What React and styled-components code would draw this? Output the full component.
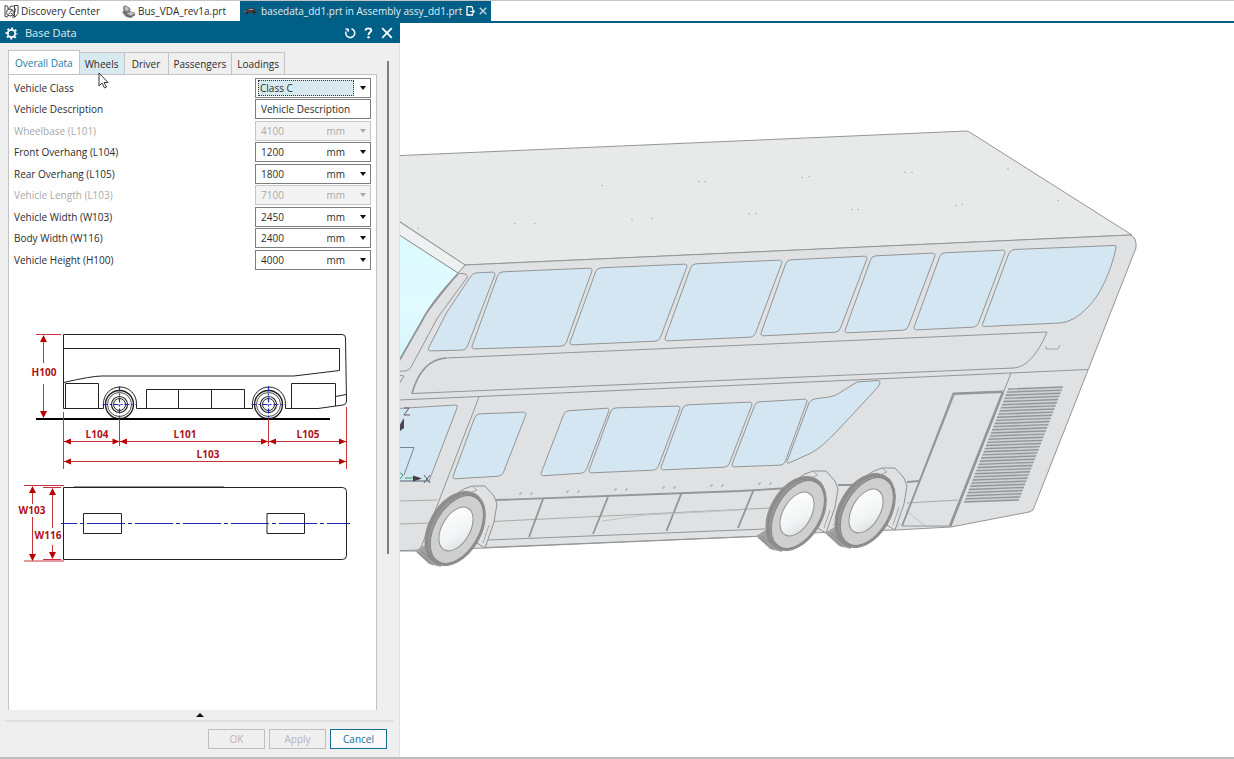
import React, { useState } from "react";
import styled, { createGlobalStyle } from "styled-components";

const GlobalStyle = createGlobalStyle`
  * {
    box-sizing: border-box;
  }

  body {
    margin: 0;
    background: #fff;
    color: #2b2b2b;
    font-family: "Open Sans", "Noto Sans", sans-serif;
    font-size: 10px;
    line-height: 14px;
  }

  button, input, select {
    font: inherit;
    color: inherit;
    margin: 0;
    padding: 0;
    border: 0;
    border-radius: 0;
    background: none;
    outline: none;
  }

  svg {
    display: block;
    flex: none;
  }
`;

const Page = styled.div`
  display: flex;
  flex-direction: column;
  min-height: 100vh;
  border-top: 1px solid #c4c4c4;
  border-bottom: 2px solid #bdbdbd;
`;

const DocBar = styled.nav`
  display: flex;
  height: 22px;
  border-bottom: 2px solid #005f87;
`;

const DocTab = styled.button`
  display: flex;
  align-items: center;
  gap: ${(props) => props.$gap || 2}px;
  padding: 0 ${(props) => props.$right || 14}px 0 4px;
  white-space: nowrap;
  background: ${(props) => (props.$active ? "#005f87" : "transparent")};
  color: ${(props) => (props.$active ? "#e3edf2" : "#2b2b2b")};
`;

const Workspace = styled.main`
  display: flex;
  flex: 1;
`;

const Dialog = styled.section`
  position: relative;
  display: flex;
  flex-direction: column;
  width: 400px;
  flex: none;
  background: #efefef;
  border-right: 1px solid #e2e2e2;
`;

const DialogHeader = styled.header`
  display: flex;
  align-items: center;
  height: 20px;
  margin-right: -1px;
  padding: 0 7px 0 5px;
  background: #005f87;
  color: #e3edf2;
`;

const DialogTitle = styled.h1`
  flex: 1;
  margin: 0 0 0 7px;
  font-size: 11px;
  font-weight: 400;
`;

const HeaderButton = styled.button`
  display: flex;
  margin-left: 8px;
  color: #fff;
`;

const DialogBody = styled.div`
  display: flex;
  flex: 1;
  padding: 7px 0 0 8px;
`;

const BodyColumn = styled.div`
  display: flex;
  flex: 1;
  flex-direction: column;
`;

const TabList = styled.div`
  display: flex;
  align-items: flex-end;
  height: 25px;
  margin-bottom: -1px;
`;

const Tab = styled.button`
  height: ${(props) => (props.$active ? 25 : 23)}px;
  min-width: 44px;
  padding: 0 ${(props) => (props.$active ? 6 : 5)}px;
  border: 1px solid #c3c3c3;
  border-left-width: ${(props) => (props.$active ? 1 : 0)}px;
  border-bottom-color: ${(props) => (props.$active ? "#fff" : "#c3c3c3")};
  background: ${(props) => (props.$active ? "#fff" : "#efefef")};
  color: ${(props) => (props.$active ? "#1b7ba0" : "#2b2b2b")};

  &:nth-child(2) {
    background: #d8eaf0;
  }
`;

const Panel = styled.div`
  flex: 1;
  border: 1px solid #c3c3c3;
  border-bottom: 0;
  background: #fff;
`;

const Form = styled.div`
  display: grid;
  grid-auto-rows: 1fr;
  height: 193px;
  margin: 3px 5px 0;
`;

const Row = styled.div`
  display: flex;
  align-items: flex-start;
  justify-content: space-between;
  color: ${(props) => (props.$disabled ? "#a9a9a9" : "#2b2b2b")};
`;

const RowLabel = styled.label`
  line-height: 20px;
`;

const Field = styled.div`
  display: flex;
  align-items: center;
  width: 116px;
  height: 20px;
  padding: 0 3px 0 ${(props) => (props.$select ? 2 : 5)}px;
  border: 1px solid ${(props) => (props.$disabled ? "#c6c6c6" : "#7d7d7d")};
  background: ${(props) => (props.$disabled ? "#f3f3f3" : "#fff")};
`;

const FieldInput = styled.input`
  flex: 1;
  min-width: 0;
  height: 16px;
`;

const Unit = styled.span`
  margin-right: 14px;
`;

const ClassSelect = styled.select`
  width: 97px;
  height: 16px;
  margin-right: 5px;
  padding-left: 1px;
  border: 1px dotted #333;
  background: #d8eaf0;
  line-height: 14px;
  appearance: none;
`;

const Diagram = styled.svg`
  width: 100%;
  margin-top: 49px;
`;

const ScrollTrack = styled.div`
  width: 22px;
  padding: 11px 0 0 10px;
`;

const ScrollThumb = styled.div`
  width: 2px;
  height: 76%;
  background: #7d7d7d;
`;

const Collapse = styled.button`
  display: flex;
  align-items: center;
  justify-content: center;
  height: 10px;
`;

const DialogFooter = styled.footer`
  display: flex;
  justify-content: flex-end;
  gap: 4px;
  margin: 0 5px;
  padding: 7px 7px 8px;
  border-top: 2px solid #e0e0e0;
`;

const FooterButton = styled.button`
  width: 57px;
  height: 20px;
  border: 1px solid ${(props) => (props.$primary ? "#1b6c92" : "#bfbfbf")};
  background: ${(props) => (props.$primary ? "#fafafa" : "#efefef")};
  color: ${(props) => (props.$primary ? "#1b6c92" : "#b5b5b5")};
`;

const Pointer = styled.svg`
  position: absolute;
  left: 98px;
  top: 49px;
  pointer-events: none;
`;

const Viewport = styled.div`
  flex: 1;
  min-width: 0;
  overflow: hidden;
`;

const fields = [
  { id: "wheelbase", label: "Wheelbase (L101)", value: "4100", disabled: true },
  { id: "front", label: "Front Overhang (L104)", value: "1200" },
  { id: "rear", label: "Rear Overhang (L105)", value: "1800" },
  { id: "length", label: "Vehicle Length (L103)", value: "7100", disabled: true },
  { id: "width", label: "Vehicle Width (W103)", value: "2450" },
  { id: "body", label: "Body Width (W116)", value: "2400" },
  { id: "height", label: "Vehicle Height (H100)", value: "4000" },
];

const tabs = ["Overall Data", "Wheels", "Driver", "Passengers", "Loadings"];

function Caret({ color = "#111", up }) {
  return (
    <svg width="8" height="4" viewBox="0 0 8 4">
      <path d={up ? "M0 4 4 0 8 4Z" : "M1 0H7L4 4Z"} fill={color} />
    </svg>
  );
}

function DiscoveryIcon() {
  return (
    <svg width="15" height="14" viewBox="0 0 15 14" fill="none" stroke="#444">
      <path d="M1 1.5 4 2.5V5M1 1.5V12.5L4 13M4.5 5 7 2.5M10 1.5h4v8l-3 3.5H8" />
      <circle cx="6" cy="8.5" r="3.5" />
      <path d="M6 2.5C10 1 12 4 11 8M4.5 10.5 8 6M10.5 2v11M7 9l3 3" />
    </svg>
  );
}

function PartIcon() {
  return (
    <svg width="14" height="13" viewBox="0 0 14 13">
      <path d="M1 2.500Q1 0 4 .5L8 3Q9 4.500 8 6L12.500 7.500Q14 9 12.500 10.500L9 13 4 12 .5 8Q0 7 1.500 6Z" fill="#858585" />
      <path d="M2.500 2Q5 1 7 4L5 6Q2.500 5 2.500 2ZM5 8.500 9 7 12.500 8.500 9 10.500Z" fill="#c2c2c2" />
      <path d="M1 6.500 5 8.500M4 10 8.500 12 13 9.500" stroke="#5a5a5a" fill="none" />
    </svg>
  );
}

function CarIcon() {
  return (
    <svg width="13" height="6" viewBox="0 0 13 6">
      <path d="M0 3 3 2 5 0H9L12 2 13 4 11 5H1Z" fill="#3d3d3d" />
      <path d="M4 2 6 1H8L10 2Z" fill="#aaa" />
      <path d="M0 3.500H4" stroke="#a87c63" />
      <circle cx="3" cy="4.500" r="1.300" fill="#222" />
      <circle cx="10" cy="4.500" r="1.300" fill="#222" />
    </svg>
  );
}

function ModifiedIcon() {
  return (
    <svg width="9" height="10" viewBox="0 0 9 10" fill="none" stroke="#fff">
      <path d="M6.500 3V1.500L5.500 .7H1V9H6.500V8" strokeWidth="1.300" />
      <path d="M4 5.500H8M6.300 3.500 8.300 5.500 6.300 7.500" strokeWidth="1.200" />
    </svg>
  );
}

function CrossIcon({ size, width, color = "#fff" }) {
  return (
    <svg width={size} height={size} viewBox="0 0 10 10">
      <path d="M1 1 9 9M9 1 1 9" stroke={color} strokeWidth={width} />
    </svg>
  );
}

function GearIcon() {
  return (
    <svg width="13" height="13" viewBox="0 0 13 13" fill="none" stroke="#fff">
      <circle cx="6.500" cy="6.500" r="3.700" strokeWidth="1.800" />
      <circle
        cx="6.500"
        cy="6.500"
        r="5.300"
        strokeWidth="1.500"
        strokeDasharray="2 2.163"
        strokeDashoffset="1"
      />
    </svg>
  );
}

function ResetIcon() {
  return (
    <svg width="12" height="12" viewBox="0 0 12 12" fill="none" stroke="#fff">
      <path d="M7.500 1.700A4.500 4.500 0 1 1 2 4.500" strokeWidth="1.500" />
      <path d="M.8 1.500H4.800V5.500Z" fill="#fff" stroke="none" />
    </svg>
  );
}

function HelpIcon() {
  return (
    <svg width="9" height="12" viewBox="0 0 9 12" fill="none" stroke="#fff">
      <path
        d="M1.500 3.500C1.700.8 7.300.5 7.300 3.500 7.300 5.500 4.500 5.300 4.500 8"
        strokeWidth="1.900"
      />
      <circle cx="4.500" cy="10.300" r="1.200" fill="#fff" stroke="none" />
    </svg>
  );
}

function arrow(x, y, dir) {
  const shapes = {
    left: "l7-3v6z",
    right: "l-7-3v6z",
    up: "l-3.500 7h7z",
    down: "l-3.500-7h7z",
  };
  return `M${x} ${y}${shapes[dir]}`;
}

const arrows = [
  arrow(43.5, 335, "up"),
  arrow(43.5, 418, "down"),
  arrow(64, 441.5, "left"),
  arrow(119.5, 441.5, "right"),
  arrow(120, 441.5, "left"),
  arrow(268, 441.5, "right"),
  arrow(269, 441.5, "left"),
  arrow(346, 441.5, "right"),
  arrow(64, 461.5, "left"),
  arrow(346, 461.5, "right"),
  arrow(32.5, 486, "up"),
  arrow(32.5, 561, "down"),
  arrow(52.5, 488, "up"),
  arrow(52.5, 559, "down"),
].join("");

function DiagramWheel({ x }) {
  return (
    <g transform={`translate(${x} 404.5)`}>
      <path d="M-17.500 4H-16V-1A16.500 16.500 0 0 1 17 -1V4H18" />
      <circle r="14" fill="#fff" strokeWidth="1.400" />
      <circle r="12" strokeWidth=".8" />
      <circle r="8" strokeWidth="1.200" />
      <circle r="6" />
      <path
        d="M-17 0H17M0-18V15"
        stroke="#2222b4"
        strokeWidth="1.200"
        strokeDasharray="5 2 2 2"
      />
    </g>
  );
}

function DimensionDiagram() {
  return (
    <Diagram viewBox="9 320 367 260" role="img" aria-label="Vehicle dimensions">
      <g fill="none" stroke="#222">
        <path d="M63.500 408.500V334.500H342Q345.500 334.500 345.500 338L346.500 401Q346.500 404.500 343 405L318 408.500" />
        <path d="M63.500 348.500H339.500V370.500L294 376H102Q92 376 63.500 382.500" />
        <path d="M65.500 408.500V383.500H98.500V408.500M146.500 408.500V389.500H244.500V408.500M178.500 389.500V408.500M211.500 389.500V408.500M291.500 408.500V383.500H335.500V406M335.500 396.500 346 394.500" />
        <path d="M63.500 408.500H102M137 408.500H251M286 408.500H318" />
        <DiagramWheel x={119.5} />
        <DiagramWheel x={268.5} />
        <path d="M36 419H330" stroke="#000" strokeWidth="2" />
        <path d="M63.500 487.500H342.500Q346.500 487.500 346.500 491.500V555.500Q346.500 559.500 342.500 559.500H63.500Z" />
        <path d="M83.500 513.500H121.500V533.500H83.500ZM267 513.500H304.500V533.500H267Z" />
        <path d="M74 486.500H224" stroke="#999" />
        <path
          d="M61 523.500H350"
          stroke="#2222b4"
          strokeDasharray="38 3 4 3"
          strokeDashoffset="22"
        />
      </g>
      <g fill="none" stroke="#c8323a">
        <path d="M36 334.500H61M43.500 336V363M43.500 384V417" />
        <path d="M63.500 412V469M346.500 407V469M119.500 419V446M268.500 419V446" />
        <path d="M64 441.500H346M64 461.500H346" />
        <path d="M24 485.500H64M24 561H64M43 487.500H61M43 559.500H61" />
        <path d="M32.500 487V504M32.500 517V560M52.500 489V528M52.500 545V558" />
      </g>
      <path d={arrows} fill="#b80000" />
      <g fill="#b01018" fontSize="10" fontWeight="700" textAnchor="middle">
        <text x="44" y="376">H100</text>
        <text x="97" y="438">L104</text>
        <text x="185" y="438">L101</text>
        <text x="308" y="438">L105</text>
        <text x="208" y="458">L103</text>
        <text x="32" y="514">W103</text>
        <text x="48" y="539">W116</text>
      </g>
    </Diagram>
  );
}

// closed outline with softened corners
function rounded(points, r = 4) {
  const n = points.length;
  const toward = (a, b) => {
    const len = Math.hypot(b[0] - a[0], b[1] - a[1]);
    const t = Math.min(r / len, 0.5);
    return `${a[0] + (b[0] - a[0]) * t} ${a[1] + (b[1] - a[1]) * t}`;
  };
  return (
    points
      .map((p, i) => {
        const before = toward(p, points[(i + n - 1) % n]);
        const after = toward(p, points[(i + 1) % n]);
        return `${i ? "L" : "M"}${before}Q${p[0]} ${p[1]} ${after}`;
      })
      .join("") + "Z"
  );
}

const glass = [
  [[473, 273], [496, 272], [466, 350], [427, 351], [447, 312]],
  [[499, 272], [593, 268], [565, 346], [471, 349]],
  [[597, 268], [688, 264], [659, 341], [569, 345]],
  [[692, 264], [783, 260], [754, 337], [664, 341]],
  [[787, 260], [868, 256], [839, 332], [760, 336]],
  [[872, 256], [936, 253], [907, 330], [844, 333]],
  [[941, 253], [1006, 250], [977, 327], [913, 330]],
  [[476, 414], [527, 412], [502, 476], [452, 479]],
  [[565, 411], [610, 408], [585, 473], [540, 476]],
  [[612, 408], [681, 406], [657, 470], [588, 473]],
  [[684, 405], [753, 402], [728, 467], [660, 470]],
  [[756, 402], [808, 399], [784, 465], [731, 467]],
];

const louvres = Array.from({ length: 37 }, (_, i) => {
  const t = i / 36;
  const left = 1008 - 44 * t;
  const right = 1063 - 44 * t;
  const y = 389 + 113 * t;
  return `M${left} ${y}L${right} ${y - 2}`;
}).join("");

const skirtMarks = [520, 567, 615, 663, 711, 759]
  .map((x, i) => {
    const y = 495 - i * 2;
    return `M${x} ${y}v-2h2M${x + 11} ${y}v-2h2`;
  })
  .join("");

const roofMarks = [
  [601, 185], [698, 181], [704, 181], [514, 223], [534, 223], [631, 219], [651, 218],
  [748, 213], [755, 213], [801, 177], [808, 176], [904, 172], [911, 172],
  [851, 209], [857, 209], [955, 205], [961, 204], [1007, 168], [1057, 200], [417, 228],
]
  .map(([x, y]) => `M${x} ${y}l2 1`)
  .join("");

function BusWheel({ x, y }) {
  return (
    <g transform={`translate(${x} ${y})`}>
      <path
        d="M0-35 8-40 16-43 29-43 38-33 41-25 38-7 29 19 14 10Z"
        fill="#dfe1e2"
        stroke="#8f9192"
      />
      <path d="M16-43 21-39 11-35M27 14 33-4" fill="none" stroke="#a6a8a9" />
      <path d="M-41 22-27 35-15 38-22 10Z" fill="#a2a3a3" />
      <path d="M-38 23-23 36M-35 22-20 35" stroke="#858585" />
      <ellipse
        cx="-1"
        rx="26"
        ry="40"
        transform="rotate(30)"
        fill="#979797"
        stroke="#8a8a8a"
      />
      <ellipse
        cx="-1"
        rx="24"
        ry="38"
        transform="rotate(30)"
        fill="none"
        stroke="#7f7f7f"
        strokeWidth="2"
        strokeDasharray="1 1"
      />
      <ellipse
        cx="1"
        rx="22"
        ry="37"
        transform="rotate(30)"
        fill="#cfcfcf"
        stroke="#868686"
      />
      <ellipse
        rx="14"
        ry="24"
        transform="rotate(30)"
        fill="url(#hub)"
        stroke="#929292"
      />
    </g>
  );
}

function BusModel() {
  return (
    <svg
      width="100%"
      height="100%"
      viewBox="400 23 834 734"
      preserveAspectRatio="xMinYMin slice"
      role="img"
      aria-label="Bus model"
    >
      <defs>
        <linearGradient id="hub" x1="0" y1="0" x2="1" y2="1">
          <stop offset="0" stopColor="#fff" />
          <stop offset=".6" stopColor="#f2f5f5" />
          <stop offset="1" stopColor="#d5dbdb" />
        </linearGradient>
        <linearGradient id="windshield" x1="0" y1="0" x2="0" y2="1">
          <stop offset="0" stopColor="#dcfbff" />
          <stop offset=".6" stopColor="#e1fbff" />
          <stop offset="1" stopColor="#d6f4fb" />
        </linearGradient>
      </defs>
      <g stroke="#939596" strokeLinejoin="round">
        <path d="M390 156 967 131 971 133 1132 235 465 265 390 215Z" fill="#e8eaea" />
        <path
          d="M465 265 1130 235Q1137 237 1136 248L1033 510 1029 512 951 527 895 530 830 532 765 536 485 548 420 550 390 551V360L458 273Z"
          fill="#dfe1e2"
        />
        <path d="M390 215.500 465 265 458 273 390 229Z" fill="#eff0f2" />
        <path
          d="M390 229 458 273Q430 303 421 322L400 360H390Z"
          fill="url(#windshield)"
        />
        <g fill="none">
          <path d="M458 274Q431 303 422 321L399 361" strokeWidth="1.800" />
          <path d="M458 273 465 274Q469 275 466 279L438 317 411 367Q409 371 405 371L399 371" />
          <path d="M399 375 404 376 399 384" />
          <path d="M412 393.500Q422 359 446 358L1047 332Q1033 366 1014 368L412 393.500" />
          <path d="M412 393.500Q421 360 446 358" strokeWidth="1.500" />
          <path d="M399 400 720 386 1088 369.500M479 397 420 550" />
        </g>
        <g fill="#d3e6f1">
          {glass.map((points, i) => (
            <path key={i} d={rounded(points)} />
          ))}
          <path d="M1014 249.500 1114 245.500Q1117 245 1116 248C1110 275 1099 296 1088 307Q1074 322 1060 323L984 326.500Q981 326 983 323L1009 253Q1011 250 1014 249.500Z" />
          <path d="M814 399 829 397Q836 396 841 392L857 382 878 380.500Q882 381 878 387L838 430Q820 449 811 453L789 463Q785 464 788 459L809 403Q811 400 814 399Z" />
          <path d="M390 409 456 405Q458 405 457 408L429 481H390Z" />
        </g>
        <g fill="none">
          <path d="M496 500 740 491 790 488M838 485H853M907 482 920 481" strokeWidth="1.800" />
          <path
            d="M493 521.500 770 508M838 506 850 505M907 503 958 500M399 501 437 500M399 524 432 523"
            stroke="#aaa"
          />
          <path d="M488 540 765 529M399 551H420M485 547.500 765 536" />
          <path
            d="M543 499 529 537M608 497 593 534M681.500 493 666.500 531M753.500 490 738 528"
            strokeWidth="1.800"
          />
          <path d={skirtMarks} stroke="#a5a5a5" />
          <path
            d="M602 521 645 515 740 510M905 510 925 526M832 525H838M900 523 895 530"
            stroke="#c0c2c3"
          />
          <path d="M1011 373 1004 391 951 526H902L953 393 1004 391" />
          <path d="M1003 392 950 526" strokeWidth="2.500" />
          <path d="M902 526 954 394 1002 392" strokeWidth="1.800" />
          <path d="M1046 346V349H1058L1060 345" stroke="#a5a5a5" />
          <path d="M1008 389 1063 387 1019 500 964 502Z" fill="#cfd1d2" stroke="none" />
          <path d={louvres} stroke="#939596" strokeWidth="1.400" />
          <path d={roofMarks} stroke="#b7b9b9" />
        </g>
      </g>
      <BusWheel x={866} y={511} />
      <BusWheel x={797} y={514} />
      <BusWheel x={456} y={529} />
      <g fill="none" stroke="#645769">
        <path d="M404 408H409L404 415H410M424 475 430 483M430 475 424 483" />
        <path d="M399 447.500H414L404 475M399 481H430" stroke="#77849a" />
        <path d="M413 475.500V481.500L422 478.500Z" fill="#4a3a44" stroke="none" />
        <path d="M399 426 404 418 404 428 400 431Z" fill="#4a4455" stroke="none" />
        <path d="M399 472 403 475 400 479M405 478H413" stroke="#3f9b62" />
      </g>
    </svg>
  );
}

function NumberField({ field }) {
  return (
    <Row $disabled={field.disabled}>
      <RowLabel htmlFor={field.id}>{field.label}</RowLabel>
      <Field $disabled={field.disabled}>
        <FieldInput id={field.id} defaultValue={field.value} disabled={field.disabled} />
        <Unit>mm</Unit>
        <button type="button" aria-label={`${field.label} options`} disabled={field.disabled}>
          <Caret color={field.disabled ? "#a9a9a9" : "#111"} />
        </button>
      </Field>
    </Row>
  );
}

function App() {
  const [active, setActive] = useState("Overall Data");

  return (
    <Page>
      <GlobalStyle />
      <DocBar>
        <DocTab $right={18}>
          <DiscoveryIcon />
          Discovery Center
        </DocTab>
        <DocTab>
          <PartIcon />
          Bus_VDA_rev1a.prt
        </DocTab>
        <DocTab $active $gap={4} $right={4}>
          <CarIcon />
          basedata_dd1.prt in Assembly assy_dd1.prt
          <ModifiedIcon />
          <CrossIcon size={8} width={2} color="#b9d0dc" />
        </DocTab>
      </DocBar>
      <Workspace>
        <Dialog>
          <DialogHeader>
            <GearIcon />
            <DialogTitle>Base Data</DialogTitle>
            <HeaderButton aria-label="Reset">
              <ResetIcon />
            </HeaderButton>
            <HeaderButton aria-label="Help">
              <HelpIcon />
            </HeaderButton>
            <HeaderButton aria-label="Close">
              <CrossIcon size={12} width={1.5} />
            </HeaderButton>
          </DialogHeader>
          <DialogBody>
            <BodyColumn>
              <TabList role="tablist">
                {tabs.map((tab) => (
                  <Tab
                    key={tab}
                    role="tab"
                    aria-selected={tab === active}
                    $active={tab === active}
                    onClick={() => setActive(tab)}
                  >
                    {tab}
                  </Tab>
                ))}
              </TabList>
              <Panel>
                <Form>
                  <Row>
                    <RowLabel htmlFor="class">Vehicle Class</RowLabel>
                    <Field $select>
                      <ClassSelect id="class">
                        <option>Class C</option>
                      </ClassSelect>
                      <Caret />
                    </Field>
                  </Row>
                  <Row>
                    <RowLabel htmlFor="description">Vehicle Description</RowLabel>
                    <Field>
                      <FieldInput id="description" defaultValue="Vehicle Description" />
                    </Field>
                  </Row>
                  {fields.map((field) => (
                    <NumberField key={field.id} field={field} />
                  ))}
                </Form>
                <DimensionDiagram />
              </Panel>
            </BodyColumn>
            <ScrollTrack>
              <ScrollThumb />
            </ScrollTrack>
          </DialogBody>
          <Collapse aria-label="Collapse">
            <Caret up />
          </Collapse>
          <DialogFooter>
            <FooterButton disabled>OK</FooterButton>
            <FooterButton disabled>Apply</FooterButton>
            <FooterButton $primary>Cancel</FooterButton>
          </DialogFooter>
          <Pointer width="11" height="17" viewBox="0 0 11 17">
            <path
              d="M1 1V14L4 11 6.500 16 8.500 15 6 10.500H10Z"
              fill="#fff"
              stroke="#333"
            />
          </Pointer>
        </Dialog>
        <Viewport>
          <BusModel />
        </Viewport>
      </Workspace>
    </Page>
  );
}

export default App;
